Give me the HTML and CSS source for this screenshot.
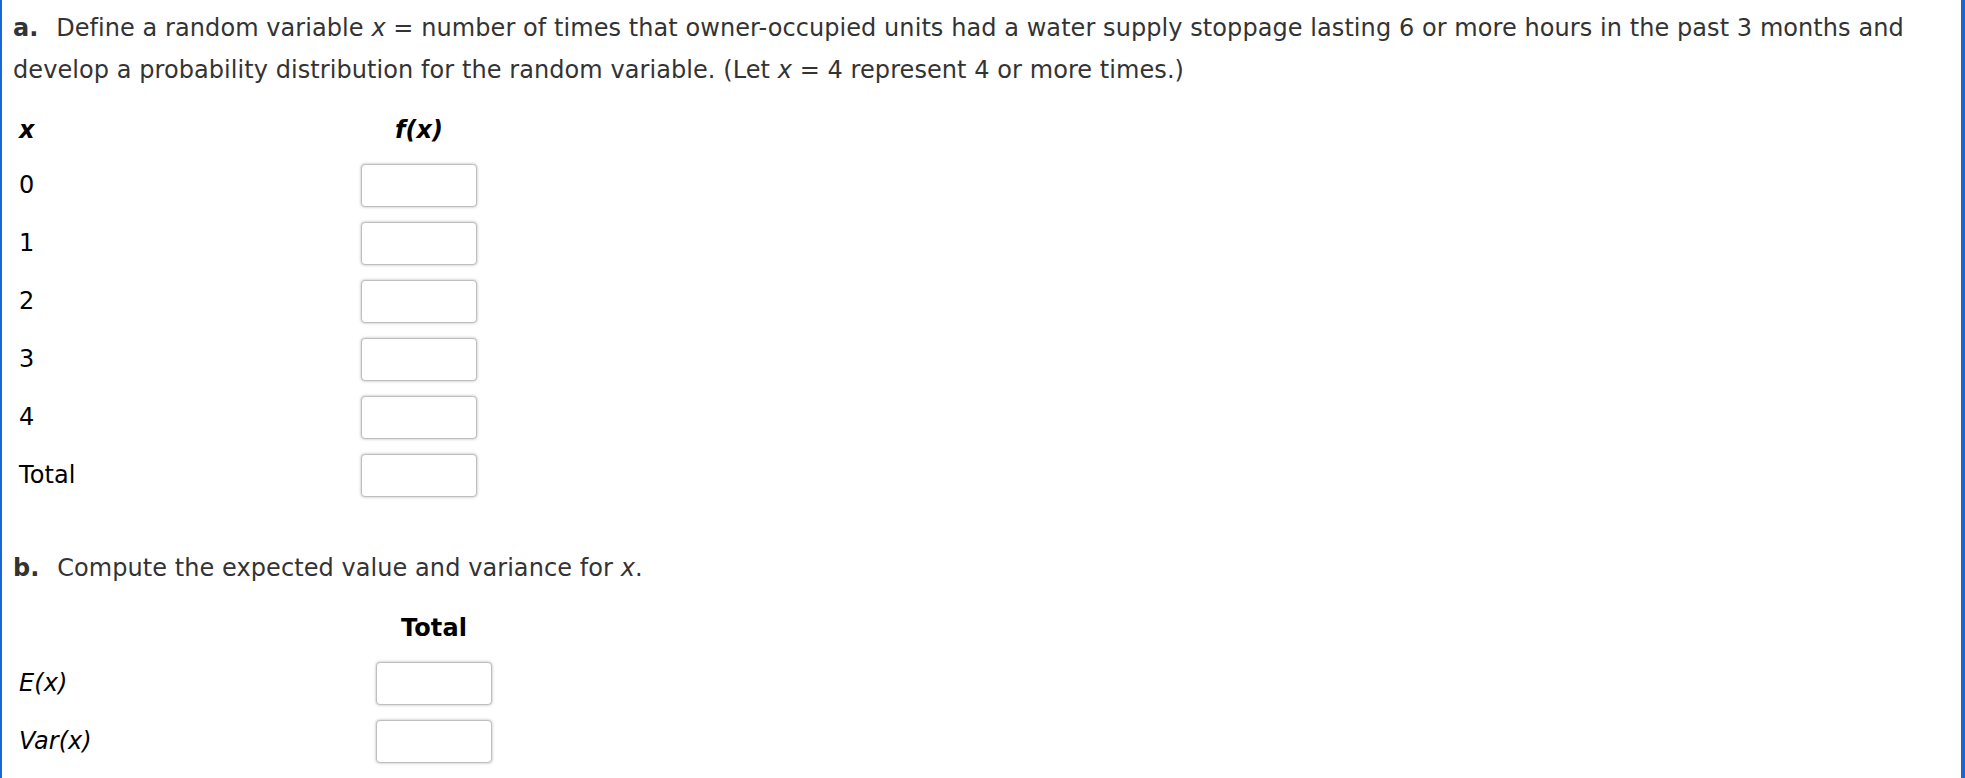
FILE: index.html
```html
<!DOCTYPE html>
<html lang="en">
<head>
<meta charset="utf-8">
<title>Probability distribution</title>
<link rel="stylesheet" href="styles.css">
</head>
<body>
<div class="frame">
  <p class="question"><b class="part">a.</b> Define a random variable <i>x</i> = number of times that owner-occupied units had a water supply stoppage lasting 6 or more hours in the past 3 months and develop a probability distribution for the random variable. (Let <i>x</i> = 4 represent 4 or more times.)</p>

  <div class="grid dist">
    <div class="head lbl"><b><i>x</i></b></div>
    <div class="head cell"><b><i>f(x)</i></b></div>

    <div class="lbl">0</div><div class="cell"><input class="answer" type="text"></div>
    <div class="lbl">1</div><div class="cell"><input class="answer" type="text"></div>
    <div class="lbl">2</div><div class="cell"><input class="answer" type="text"></div>
    <div class="lbl">3</div><div class="cell"><input class="answer" type="text"></div>
    <div class="lbl">4</div><div class="cell"><input class="answer" type="text"></div>
    <div class="lbl">Total</div><div class="cell"><input class="answer" type="text"></div>
  </div>

  <p class="question second"><b class="part">b.</b> Compute the expected value and variance for <i>x</i>.</p>

  <div class="grid stats">
    <div class="head lbl"></div>
    <div class="head cell"><b>Total</b></div>

    <div class="lbl"><i>E(x)</i></div><div class="cell"><input class="answer" type="text"></div>
    <div class="lbl"><i>Var(x)</i></div><div class="cell"><input class="answer" type="text"></div>
  </div>
</div>
</body>
</html>
```

FILE: styles.css
```css
html, body {
  margin: 0;
  padding: 0;
  background: #ffffff;
}

body {
  font-family: "DejaVu Sans", Verdana, sans-serif;
  font-size: 24px;
  letter-spacing: 0.07px;
  color: #000;
}

.frame {
  box-sizing: border-box;
  min-height: 100vh;
  border-left: 2px solid #1967d6;
  border-right: 4px solid #1967d6;
  padding: 7px 20px 0 11px;
}

.question {
  margin: 0;
  line-height: 42px;
  color: #333333;
}

.question .part {
  margin-right: 10px;
}

.question.second {
  margin-top: 43px;
}

.grid {
  display: grid;
  margin: 13px 0 0 5px;
  grid-auto-rows: 58px;
  align-items: center;
}

.dist {
  grid-template-columns: 343px 116px;
  grid-template-rows: 52px;
}

.stats {
  grid-template-columns: 358px 116px;
  grid-template-rows: 52px;
}

.lbl {
  padding-left: 1px;
}

.cell {
  display: flex;
  justify-content: center;
}

.answer {
  box-sizing: border-box;
  width: 116px;
  height: 43px;
  margin: 0;
  padding: 0 6px;
  border: 1px solid #bfbfbf;
  border-radius: 4px;
  background: #ffffff;
  box-shadow: 0 0 3px rgba(0, 0, 0, 0.3);
  font: inherit;
}
```
